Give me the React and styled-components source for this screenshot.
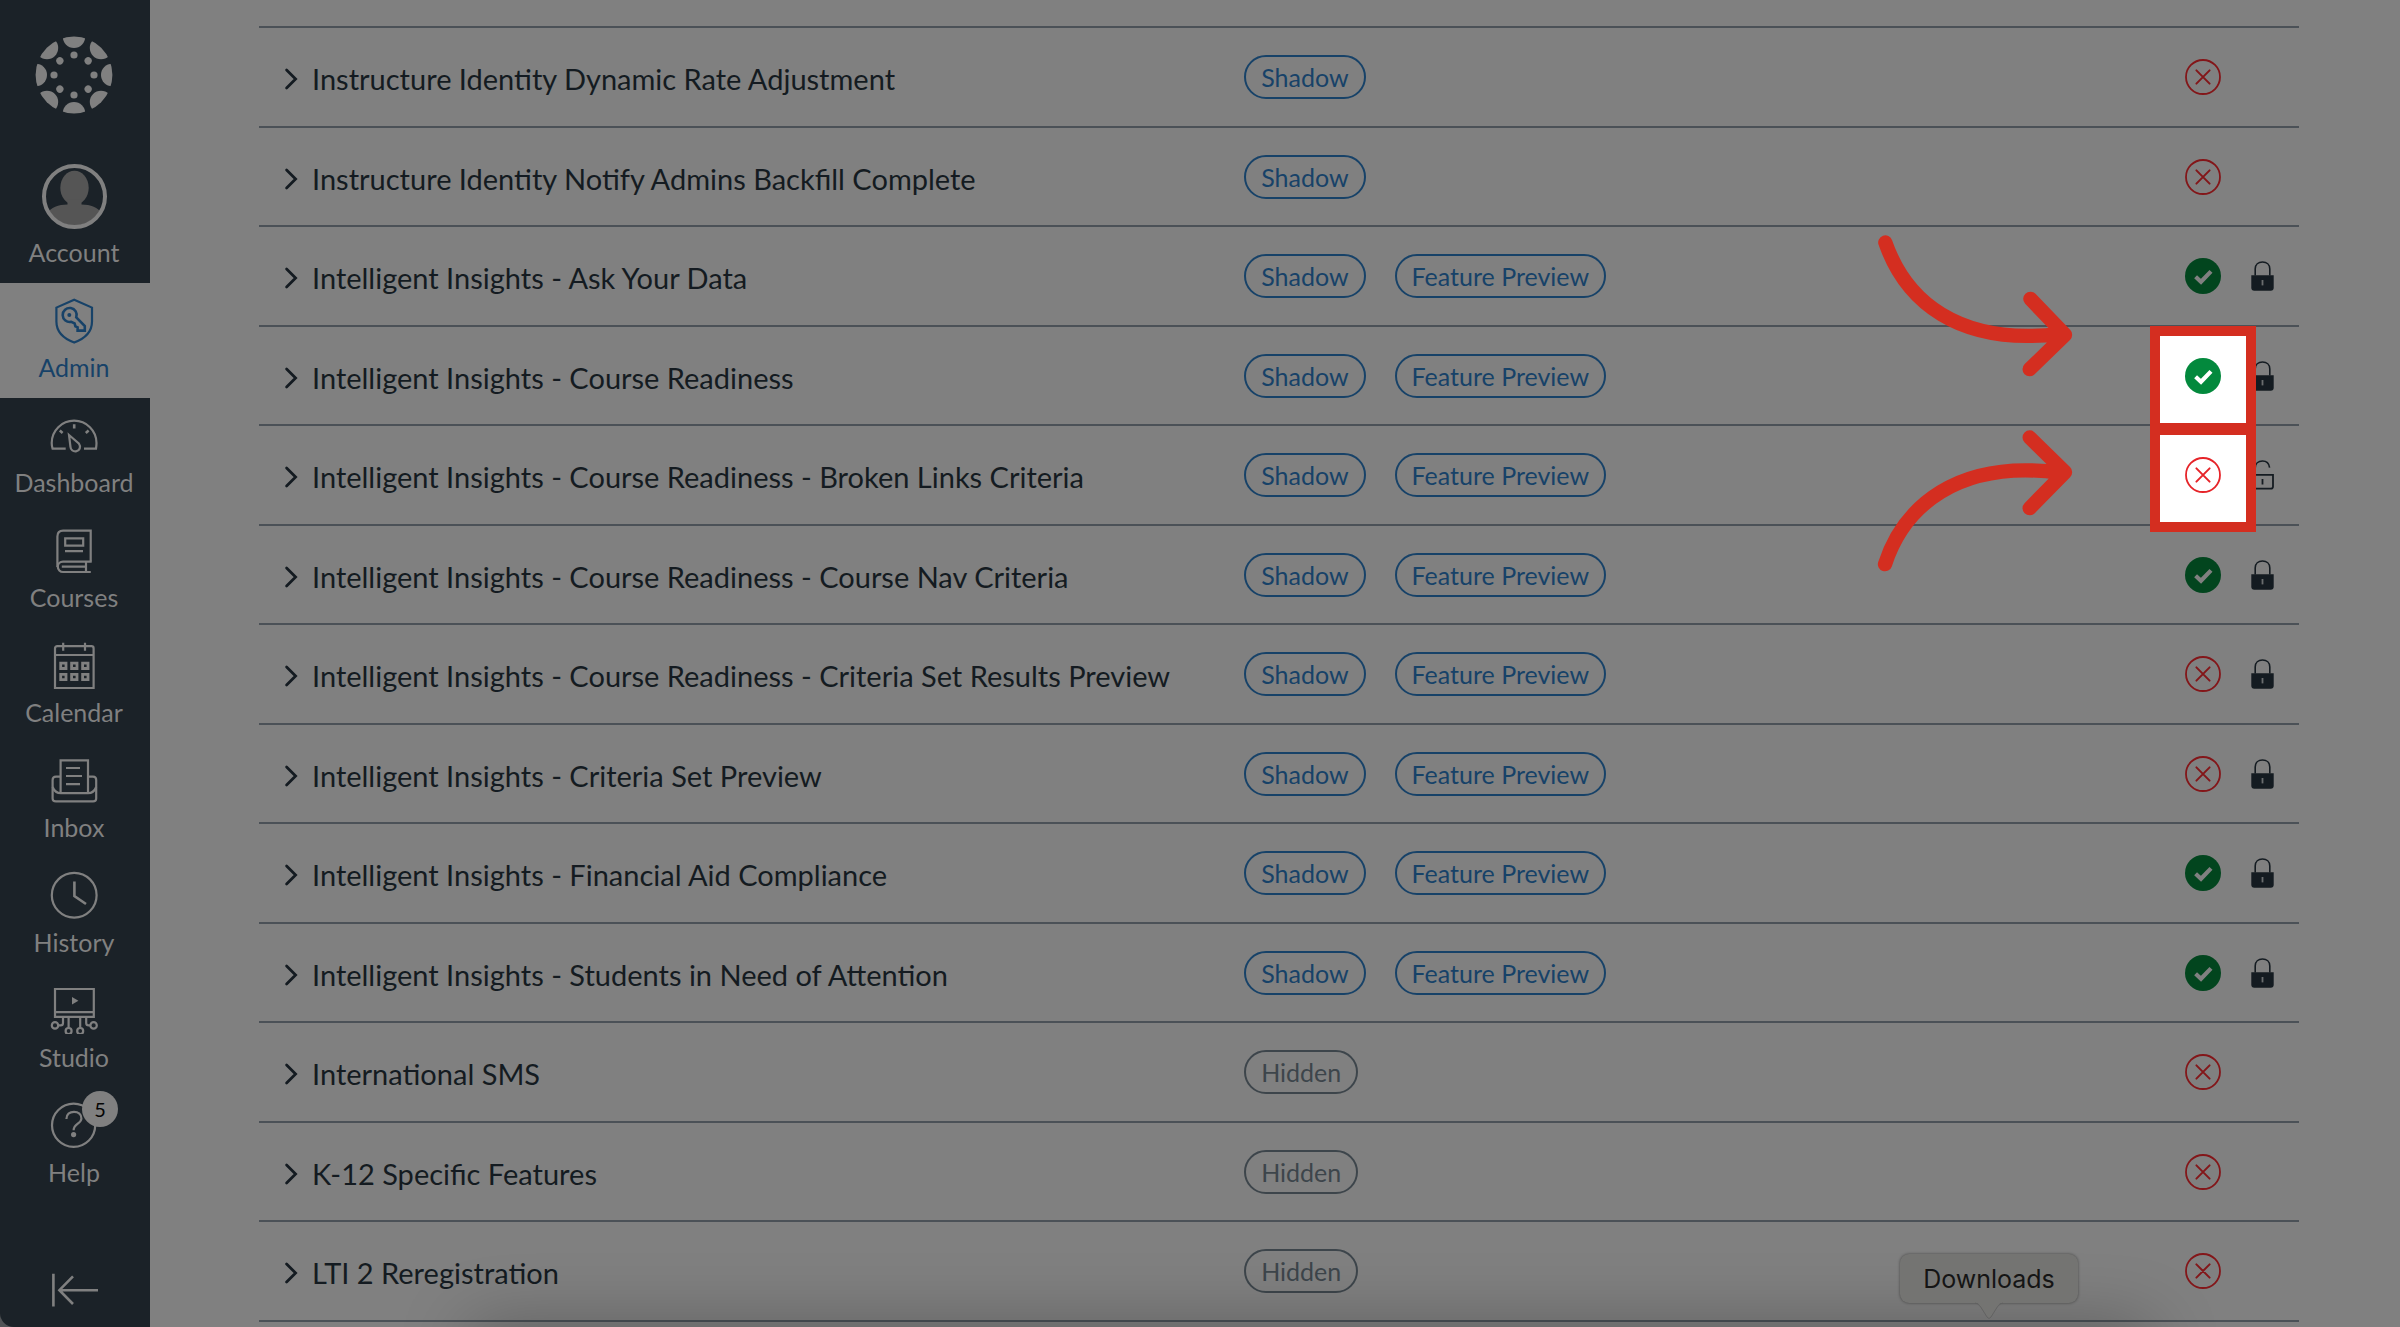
import React from "react";
import styled, { createGlobalStyle, css } from "styled-components";

const color = {
  page: "#808080",
  nav: "#1b2228",
  navText: "#808080",
  text: "#141b21",
  line: "#4b5157",
  blue: "#174268",
  grey: "#3d454b",
  green: "#02451e",
  greenLit: "#03893d",
  red: "#831619",
  redLit: "#e62429",
  marker: "#d42e20",
};

const GlobalStyle = createGlobalStyle`
  * { box-sizing: border-box; }
  body {
    margin: 0;
    background: ${color.page};
    color: ${color.text};
    font-family: Lato, "Open Sans", sans-serif;
  }
  button { font: inherit; color: inherit; background: none; border: 0; padding: 0; cursor: pointer; }
  svg { display: block; }
`;

const Page = styled.div`
  display: flex;
  min-height: 100vh;
  position: relative;
  overflow: hidden;
  background: linear-gradient(to right, #505356 75px, ${color.page} 75px);
`;

const Sidebar = styled.nav`
  width: 150px;
  flex: none;
  display: flex;
  flex-direction: column;
  background: ${color.nav};
  border-bottom-left-radius: 14px;
`;

const Brand = styled.a`
  height: 151px;
  width: 148px;
  padding-bottom: 2px;
  display: flex;
  align-items: center;
  justify-content: center;
`;

const NavList = styled.ul`
  list-style: none;
  margin: 0;
  padding: 0;
`;

const NavLink = styled.a`
  display: flex;
  flex-direction: column;
  align-items: center;
  gap: 8px;
  padding: 13px 2px 16px 0;
  font-size: 25px;
  line-height: 30px;
  text-decoration: none;
  color: ${(p) => (p.$active ? color.blue : color.navText)};
  background: ${(p) => (p.$active ? color.page : "transparent")};
`;

const IconHolder = styled.span`
  position: relative;
`;

const Badge = styled.span`
  position: absolute;
  top: -10px;
  right: -20px;
  width: 36px;
  height: 36px;
  border-radius: 50%;
  background: ${color.page};
  color: #050505;
  font-size: 20px;
  line-height: 36px;
  text-align: center;
`;

const CollapseButton = styled.button`
  margin-top: auto;
  width: 148px;
  height: 74px;
  display: flex;
  align-items: center;
  justify-content: center;
  color: ${color.navText};
`;

const Main = styled.main`
  flex: 1;
  position: relative;
  padding: 26px 101px 0 109px;
`;

const Table = styled.table`
  width: 100%;
  table-layout: fixed;
  border-collapse: separate;
  border-spacing: 0;
  border-top: 2px solid ${color.line};
`;

const NameCol = styled.col`
  width: 48%;
`;

const StateCol = styled.col`
  width: 180px;
`;

const Row = styled.tr`
  height: 99px;
  &:nth-child(odd) {
    height: 100px;
  }
`;

const cell = css`
  padding: 0;
  border-bottom: 2px solid ${color.line};
  vertical-align: middle;
`;

const NameCell = styled.th`
  ${cell}
  font-weight: 400;
  text-align: left;
`;

const TagCell = styled.td`
  ${cell}
  padding-left: 6px;
`;

const StateCell = styled.td`
  ${cell}
  padding-right: 25px;
`;

const Disclosure = styled.button`
  display: flex;
  align-items: center;
  gap: 14px;
  padding: 4px 0 0 25px;
  font-size: 29px;
  line-height: 36px;
  white-space: nowrap;
`;

const Tags = styled.div`
  display: flex;
  gap: 29px;
`;

const Tag = styled.span`
  height: 44px;
  padding: 0 15px;
  border: 2px solid currentColor;
  border-radius: 22px;
  font-size: 25px;
  line-height: 40px;
  white-space: nowrap;
  color: ${(p) => (p.$muted ? color.grey : color.blue)};
`;

const States = styled.div`
  display: flex;
  justify-content: flex-end;
  align-items: center;
  gap: 30px;
`;

const StateButton = styled.button`
  position: relative;
  width: 36px;
  height: 36px;
  & > svg {
    position: relative;
    z-index: 2;
  }
`;

const Spotlight = styled.span`
  position: absolute;
  z-index: 1;
  top: -32px;
  left: -35px;
  width: 106px;
  height: 107px;
  border: 10px solid ${color.marker};
  background: #fff;
`;

const LockSlot = styled.span`
  width: 23px;
  height: 30px;
`;

const Pointer = styled.svg`
  position: absolute;
  top: ${(p) => p.$top};
  right: 323px;
  width: 200px;
  height: 147px;
  pointer-events: none;
`;

const DockShade = styled.div`
  position: absolute;
  left: 480px;
  right: 260px;
  bottom: -50px;
  height: 40px;
  box-shadow: 0 0 70px 10px rgba(0, 0, 0, 0.3);
  pointer-events: none;
`;

const Tooltip = styled.div`
  position: absolute;
  bottom: 24px;
  right: 322px;
  width: 178px;
  height: 49px;
  border-radius: 9px;
  background: #747472;
  box-shadow: 0 0 3px rgba(0, 0, 0, 0.45);
  color: #151515;
  font-family: Inter, Roboto, sans-serif;
  font-size: 25px;
  line-height: 51px;
  text-align: center;
  & > svg {
    position: absolute;
    top: 48px;
    left: 75px;
  }
`;

const spokes = [0, 45, 90, 135, 180, 225, 270, 315];

const Logo = () => (
  <svg width="78" height="78" viewBox="-39 -39 78 78" fill="#808080" aria-hidden="true">
    <clipPath id="logo-disc">
      <circle r="38.4" />
    </clipPath>
    <g clipPath="url(#logo-disc)">
      {spokes.map((a) => (
        <circle key={a} cy="-38.2" r="11.2" transform={`rotate(${a})`} />
      ))}
    </g>
    {spokes.map((a) => (
      <circle key={a} cy="-20" r="3.6" transform={`rotate(${a})`} />
    ))}
  </svg>
);

const Avatar = () => (
  <svg width="65" height="65" viewBox="-32.5 -32.5 65 65" aria-hidden="true">
    <clipPath id="avatar-disc">
      <circle r="29" />
    </clipPath>
    <g clipPath="url(#avatar-disc)" fill="#555555">
      <ellipse cy="-8.7" rx="14.2" ry="17" />
      <path d="M-7 3H7V8C16 8 24 11 27 17V32H-27V17C-24 11-16 8-7 8Z" />
    </g>
    <circle r="30.5" fill="none" stroke="#808080" strokeWidth="4" />
  </svg>
);

const Glyph = ({ children }) => (
  <svg
    width="48"
    height="48"
    viewBox="0 0 48 48"
    fill="none"
    stroke="currentColor"
    strokeWidth="2.2"
    aria-hidden="true"
  >
    {children}
  </svg>
);

const AdminIcon = () => (
  <Glyph>
    <path d="M24.2 3.8 42 11.6V25.5C42 35.5 35 42.5 24.2 46.5 13.4 42.5 6.4 35.5 6.4 25.5V11.6Z" />
    <path d="M26.3 21.3 34.8 30V34.6H27.6V31.4L25.4 30.4 24.6 27.4 21.2 25.8A7 7 0 1 1 26.3 21.3Z" strokeWidth="2.6" />
    <circle cx="19.3" cy="19" r="2" fill="currentColor" stroke="none" />
  </Glyph>
);

const DashboardIcon = () => (
  <Glyph>
    <path d="M15.7 37.6H2.6C2 35.6 1.7 34 1.7 32A22.4 22.4 0 0 1 46.5 32C46.5 34 46.3 35.6 46 37.6H34" />
    <path d="M19 24 28.8 32.4C31.4 36 29.6 39.8 26 40.3 22.8 40.6 20.7 38.6 20.5 36Z" />
    <path d="M24.2 13.2V17.4M9.8 19.6 12.6 22M38.6 19.6 35.8 22" strokeWidth="2.6" />
  </Glyph>
);

const CoursesIcon = () => (
  <Glyph>
    <path d="M40.7 35.6V4.6H13Q7.4 4.6 7.4 10.4V41" />
    <path d="M41.7 35.6H13A5.2 5.2 0 0 0 13 46H40.8M11.8 40.6H36M36 35.6V46" />
    <path d="M15.2 12.4H33.2V19.6H15.2ZM15 25.2H33" />
  </Glyph>
);

const CalendarIcon = () => (
  <Glyph>
    <path d="M5 47.2V7.4Q5 5.2 7.4 5.2H41.4Q43.6 5.2 43.6 7.4V47.2ZM5 14H43.6M13.2 1.8V9.8M35 1.8V9.8" />
    <path
      strokeWidth="2.8"
      d="M10.7 22.2H16V27.5H10.7ZM21.6 22.2H27V27.5H21.6ZM32.6 22.2H38V27.5H32.6ZM10.7 33.3H16V38.6H10.7ZM21.6 33.3H27V38.6H21.6ZM32.6 33.3H38V38.6H32.6Z"
    />
  </Glyph>
);

const InboxIcon = () => (
  <Glyph>
    <path d="M10.6 37V4.3H38V37M16 12H30M16 20H32M16 28.2H30" />
    <path d="M10.6 20.6H6Q2.6 20.6 2.6 24V42.4Q2.6 45.4 6 45.4H43Q46.2 45.4 46.2 42.4V24Q46.2 20.6 43 20.6H38" />
    <path d="M2.6 31Q5 37.2 11 37.2H38Q43.8 37.2 46.2 31" />
  </Glyph>
);

const HistoryIcon = () => (
  <Glyph>
    <circle cx="24.2" cy="24.2" r="22.4" />
    <path d="M24.4 10.6V25L36 33" strokeWidth="2.6" />
  </Glyph>
);

const StudioIcon = () => (
  <Glyph>
    <path d="M5 3H43.8V30.8H5ZM5 26.2H43.8M18.6 31V41.8M30.2 31V41.8M13 31V37Q13 39.4 10.6 39.4H8.4M36.2 31V37Q36.2 39.4 38.6 39.4H40.6" />
    <circle cx="5" cy="39.4" r="3.2" />
    <circle cx="18.6" cy="45" r="3" />
    <circle cx="30.2" cy="45" r="3" />
    <circle cx="43.6" cy="39.4" r="3.2" />
    <path d="M22 11V18.4L28.4 14.7Z" fill="currentColor" stroke="none" />
  </Glyph>
);

const HelpIcon = () => (
  <Glyph>
    <circle cx="23.6" cy="24.2" r="21.6" />
    <path d="M16.4 18C16.4 13.4 19.6 10.8 24 10.8 28.4 10.8 31.4 13.6 31.4 17.4 31.4 22.6 23.6 23 23.6 29.2" />
    <circle cx="23.6" cy="33.6" r="2.6" fill="currentColor" stroke="none" />
  </Glyph>
);

const CollapseIcon = () => (
  <Glyph>
    <path d="M3.4 7.8V40.4M9 24.2H48M23 10.4 9.4 24.2 23 38" strokeWidth="2.6" />
  </Glyph>
);

const Chevron = () => (
  <svg width="14" height="22" viewBox="0 0 14 22" fill="none" stroke="currentColor" strokeWidth="2.8" strokeLinecap="round" aria-hidden="true">
    <path d="M2.6 2 11.6 11 2.6 20" />
  </svg>
);

const OnIcon = ({ lit }) => (
  <svg width="36" height="36" viewBox="-18 -18 36 36" aria-hidden="true">
    <circle r="18" fill={lit ? color.greenLit : color.green} />
    <path d="M-7.4 0.8-2 5.8 8-4.6" fill="none" stroke={lit ? "#fff" : color.page} strokeWidth="4.2" />
  </svg>
);

const OffIcon = ({ lit }) => (
  <svg width="36" height="36" viewBox="-18 -18 36 36" fill="none" stroke={lit ? color.redLit : color.red} strokeWidth="1.8" aria-hidden="true">
    <circle r="17" />
    <path d="M-6.6-6.6 6.6 6.6M6.6-6.6-6.6 6.6" strokeWidth="2" strokeLinecap="round" />
  </svg>
);

const LockIcon = ({ open }) => (
  <svg width="23" height="30" viewBox="0 0 23 30" fill="none" stroke={color.text} strokeWidth="1.6" aria-hidden="true">
    {open ? (
      <>
        <path d="M4.2 14.6V8C4.2 3.6 7.4 1 11.5 1 15 1 18 3.2 18.6 7.6" />
        <path d="M1 14.8H22V26.4Q22 28.6 19.8 28.6H3.2Q1 28.6 1 26.4ZM11.5 19V24.4" strokeWidth="1.8" />
      </>
    ) : (
      <>
        <path d="M4.2 14.6V8C4.2 3.6 7.4 1 11.5 1 15.6 1 18.8 3.6 18.8 8V14.6" />
        <path d="M0.3 14.2H22.7V26.8Q22.7 29.8 19.7 29.8H3.3Q0.3 29.8 0.3 26.8Z" fill={color.text} stroke="none" />
        <path d="M11.5 19V24.4" stroke="#6a6d6f" strokeWidth="1.8" />
      </>
    )}
  </svg>
);

const navItems = [
  { label: "Account", Icon: Avatar },
  { label: "Admin", Icon: AdminIcon, active: true },
  { label: "Dashboard", Icon: DashboardIcon },
  { label: "Courses", Icon: CoursesIcon },
  { label: "Calendar", Icon: CalendarIcon },
  { label: "Inbox", Icon: InboxIcon },
  { label: "History", Icon: HistoryIcon },
  { label: "Studio", Icon: StudioIcon },
  { label: "Help", Icon: HelpIcon, badge: 5 },
];

const SHADOW = ["Shadow"];
const PREVIEW = ["Shadow", "Feature Preview"];
const HIDDEN = ["Hidden"];

const features = [
  { name: "Instructure Identity Dynamic Rate Adjustment", tags: SHADOW },
  { name: "Instructure Identity Notify Admins Backfill Complete", tags: SHADOW },
  { name: "Intelligent Insights - Ask Your Data", tags: PREVIEW, on: true, lock: "closed" },
  { name: "Intelligent Insights - Course Readiness", tags: PREVIEW, on: true, lock: "closed", spot: true },
  { name: "Intelligent Insights - Course Readiness - Broken Links Criteria", tags: PREVIEW, lock: "open", spot: true },
  { name: "Intelligent Insights - Course Readiness - Course Nav Criteria", tags: PREVIEW, on: true, lock: "closed" },
  { name: "Intelligent Insights - Course Readiness - Criteria Set Results Preview", tags: PREVIEW, lock: "closed" },
  { name: "Intelligent Insights - Criteria Set Preview", tags: PREVIEW, lock: "closed" },
  { name: "Intelligent Insights - Financial Aid Compliance", tags: PREVIEW, on: true, lock: "closed" },
  { name: "Intelligent Insights - Students in Need of Attention", tags: PREVIEW, on: true, lock: "closed" },
  { name: "International SMS", tags: HIDDEN },
  { name: "K-12 Specific Features", tags: HIDDEN },
  { name: "LTI 2 Reregistration", tags: HIDDEN },
];

const FeatureRow = ({ name, tags, on, lock, spot }) => (
  <Row>
    <NameCell scope="row">
      <Disclosure type="button" aria-expanded="false">
        <Chevron />
        {name}
      </Disclosure>
    </NameCell>
    <TagCell>
      <Tags>
        {tags.map((t) => (
          <Tag key={t} $muted={t === "Hidden"}>
            {t}
          </Tag>
        ))}
      </Tags>
    </TagCell>
    <StateCell>
      <States>
        <StateButton type="button" aria-label={`${name}: ${on ? "enabled" : "disabled"}`}>
          {spot && <Spotlight />}
          {on ? <OnIcon lit={spot} /> : <OffIcon lit={spot} />}
        </StateButton>
        <LockSlot>{lock && <LockIcon open={lock === "open"} />}</LockSlot>
      </States>
    </StateCell>
  </Row>
);

export default function App() {
  return (
    <>
      <GlobalStyle />
      <Page>
        <Sidebar aria-label="Global navigation">
          <Brand href="#home" aria-label="Home">
            <Logo />
          </Brand>
          <NavList>
            {navItems.map(({ label, Icon, active, badge }) => (
              <li key={label}>
                <NavLink href={`#${label.toLowerCase()}`} $active={active}>
                  <IconHolder>
                    <Icon />
                    {badge && <Badge>{badge}</Badge>}
                  </IconHolder>
                  {label}
                </NavLink>
              </li>
            ))}
          </NavList>
          <CollapseButton type="button" aria-label="Minimize navigation">
            <CollapseIcon />
          </CollapseButton>
        </Sidebar>
        <Main>
          <Table>
            <colgroup>
              <NameCol />
              <col />
              <StateCol />
            </colgroup>
            <tbody>
              {features.map((f) => (
                <FeatureRow key={f.name} {...f} />
              ))}
            </tbody>
          </Table>
          <Pointer $top="233px" viewBox="50 40 600 440" fill="none" stroke={color.marker} strokeWidth="43" strokeLinecap="round" strokeLinejoin="round" aria-hidden="true">
            <path d="M75 68C135 240 290 380 600 342M510 237 614 345 508 448" />
          </Pointer>
          <Pointer $top="427px" viewBox="50 620 600 440" fill="none" stroke={color.marker} strokeWidth="43" strokeLinecap="round" strokeLinejoin="round" aria-hidden="true">
            <path d="M74 1031C130 860 290 715 600 757M508 651 614 755 508 863" />
          </Pointer>
        </Main>
        <DockShade />
        <Tooltip role="tooltip">
          Downloads
          <svg width="28" height="18" viewBox="0 0 28 18" aria-hidden="true">
            <path d="M0 0H28C24 1 23 4 21 7L16 15Q14 18 12 15L7 7C5 4 4 1 0 0Z" fill="#747472" />
            <path d="M0 1C4 2 5 4 7 7L12 15Q14 18 16 15L21 7C23 4 24 2 28 1" fill="none" stroke="#626262" />
          </svg>
        </Tooltip>
      </Page>
    </>
  );
}
